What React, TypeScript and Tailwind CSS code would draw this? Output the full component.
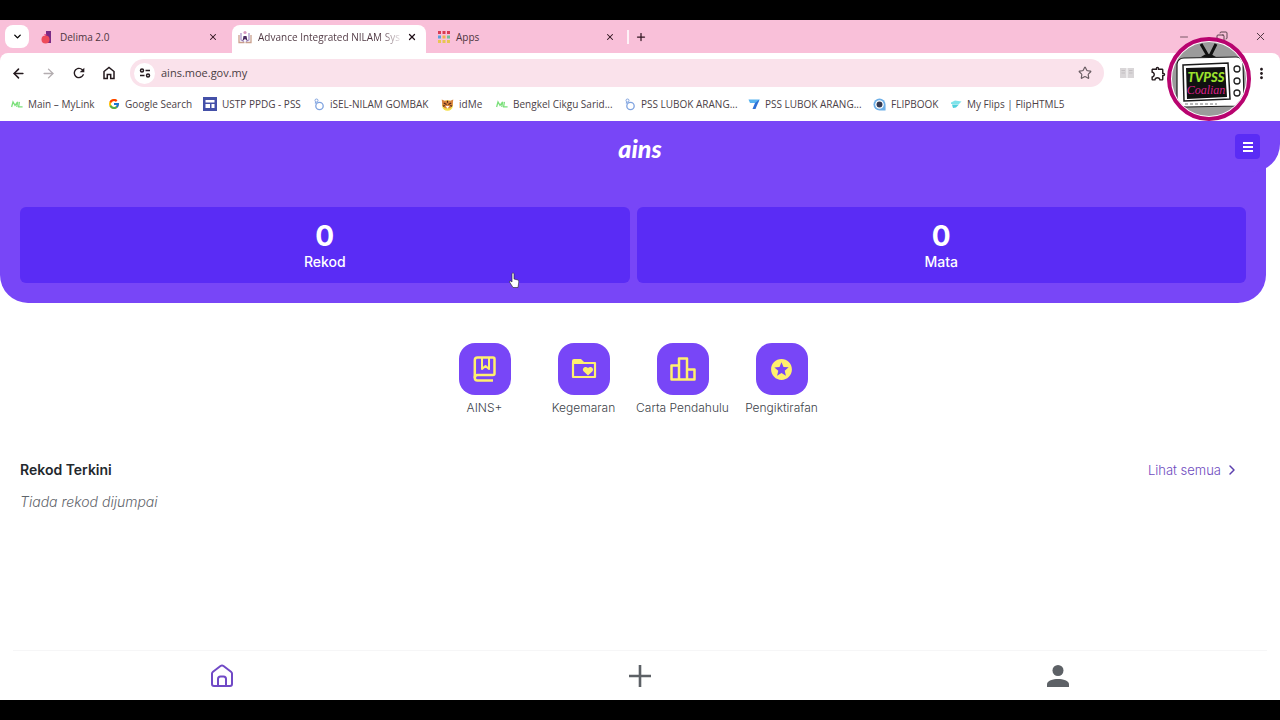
import React from 'react';
import {
  ArrowLeft,
  ArrowRight,
  ChevronDown,
  ChevronRight,
  Copy,
  Minus,
  Plus,
  Star,
  X,
} from 'lucide-react';
import { FcGoogle } from 'react-icons/fc';
import { MdMoreVert, MdOutlineExtension, MdRefresh, MdStars } from 'react-icons/md';

const MyLinkIcon = () => (
  <svg viewBox="0 0 12 12" className="w-3 h-3 shrink-0" fill="none" stroke="#7be07b" strokeWidth="1.3">
    <path d="M.6 9 2 4l2 3.4L6.600 4 5.800 9M8.400 3.800 7.600 8.800h4" />
  </svg>
);

const SitesIcon = () => (
  <svg viewBox="0 0 14 14" className="w-[14px] h-[14px] shrink-0">
    <path d="M0 0h14v14H0z" fill="#4450a8" />
    <path d="M2.500 3h9v2.500h-9zM2.500 7h4.500v4h-4.500zM8.500 7h3v4h-3z" fill="#fff" />
  </svg>
);

const BearIcon = () => (
  <svg viewBox="0 0 12 14" className="w-3 h-[14px] shrink-0" fill="none" stroke="#7fa3e0" strokeWidth="1.3">
    <circle cx="6.500" cy="9" r="3.700" />
    <circle cx="3.500" cy="3.500" r="1.500" strokeWidth="1" />
    <path d="M2.200 6.500 3 5" />
  </svg>
);

const TigerIcon = () => (
  <svg viewBox="0 0 14 14" className="w-[13px] h-[13px] shrink-0">
    <circle cx="7" cy="8" r="5.800" fill="#f5e04a" />
    <path d="M.8 1.500 4 3h6l3.200-1.500L12.500 8 10 11H4L1.500 8z" fill="#d9843b" />
    <path d="M3 5.500 6 7M11 5.500 8 7M7 3v2M2 9l2-1M12 9l-2-1" stroke="#4a2418" strokeWidth="1.200" />
    <path d="M5 8.500h4L7 11.500z" fill="#fff" />
  </svg>
);

const SevenIcon = () => (
  <svg viewBox="0 0 12 12" className="w-3 h-3 shrink-0">
    <path d="M.5 1.500h11L10 5H2z" fill="#58b4f0" />
    <path d="M11.500 1.500 7.500 11H4.500L7 5z" fill="#2f6fd6" />
  </svg>
);

const FlipbookIcon = () => (
  <svg viewBox="0 0 14 14" className="w-[13px] h-[13px] shrink-0">
    <path d="M7 .5A6.500 6.500 0 1 0 7 13.500h6.500V7A6.500 6.500 0 0 0 7 .5z" fill="#6fb0e8" />
    <circle cx="7" cy="7" r="4.600" fill="#fff" />
    <circle cx="7" cy="7" r="3.200" fill="#333a52" />
  </svg>
);

const FlipsIcon = () => (
  <svg viewBox="0 0 12 12" className="w-3 h-3 shrink-0">
    <path d="M1 4.500 5 2.500l6.500 1L9 6H1z" fill="#7fe3ea" />
    <path d="M2 6.500h7L6 9.500 3 10z" fill="#4fd0dc" />
  </svg>
);

const bookmarks = [
  { label: 'Main – MyLink', icon: <MyLinkIcon />, width: 'w-[97px]' },
  { label: 'Google Search', icon: <FcGoogle className="w-3 h-3 shrink-0" />, width: 'w-[95px]' },
  { label: 'USTP PPDG - PSS', icon: <SitesIcon />, width: 'w-[110px]' },
  { label: 'iSEL-NILAM GOMBAK', icon: <BearIcon />, width: 'w-[128px]' },
  { label: 'idMe', icon: <TigerIcon />, width: 'w-[55px]' },
  { label: 'Bengkel Cikgu Sarid...', icon: <MyLinkIcon />, width: 'w-[128px]' },
  { label: 'PSS LUBOK ARANG...', icon: <BearIcon />, width: 'w-[124px]' },
  { label: 'PSS LUBOK ARANG...', icon: <SevenIcon />, width: 'w-[125px]' },
  { label: 'FLIPBOOK', icon: <FlipbookIcon />, width: 'w-[77px]' },
  { label: 'My Flips | FlipHTML5', icon: <FlipsIcon />, width: 'w-[110px]' },
];

const DelimaIcon = () => (
  <svg viewBox="0 0 12 14" className="w-3 h-[14px] shrink-0">
    <path d="M5 1h5v12H5z" fill="#7a2a86" />
    <circle cx="4.500" cy="9.500" r="4" fill="#ee4b5a" />
    <path d="M3 4l1.500 2L6 4.500z" fill="#e2387a" />
  </svg>
);

const NilamIcon = () => (
  <svg viewBox="0 0 14 14" className="w-[14px] h-[14px] shrink-0" fill="none">
    <path d="M1 5v7.500h5.500M13 5v7.500H7.500" stroke="#c9a08e" strokeWidth="1.300" />
    <path d="M3 3v7l3 1.500M11 3v7l-3 1.500" stroke="#a58cc4" strokeWidth="1.200" />
    <circle cx="7" cy="2.500" r="1.600" fill="#d99bc0" />
    <path d="M4.500 11 5.500 6h3l1 5L7 9z" fill="#4d2d62" />
  </svg>
);

const appDots = [
  '#d93a52', '#d93a52', '#d93a52',
  '#5aa0dc', '#f0b04c', '#6fbf9a',
  '#e8c552', '#e8c552', '#e8c552',
];

const AppsIcon = () => (
  <svg viewBox="0 0 12 12" className="w-3 h-3 shrink-0">
    {appDots.map((color, i) => (
      <rect key={i} x={(i % 3) * 4.500} y={Math.floor(i / 3) * 4.500} width="3" height="3" fill={color} />
    ))}
  </svg>
);

const TabStrip = () => (
  <div className="flex h-[33px] items-end bg-[#f9c0d9] pl-1 text-[10px] text-[#4d3540]">
    <button aria-label="Search tabs" className="mb-[5px] ml-[1px] flex h-[23px] w-6 items-center justify-center rounded-lg bg-white text-black">
      <ChevronDown size={11} strokeWidth={3} />
    </button>
    <div className="flex h-7 w-[203px] items-center pl-3 pr-[14px] pb-1">
      <DelimaIcon />
      <span className="ml-[7px] flex-1">Delima 2.0</span>
      <button aria-label="Close Delima 2.0" className="text-[#301520]"><X size={10} strokeWidth={2.500} /></button>
    </div>
    <div className="flex h-7 w-[194px] items-center rounded-t-lg bg-white pl-[6px] pr-[9px] pb-1">
      <NilamIcon />
      <span className="ml-[6px] whitespace-nowrap bg-linear-to-r from-[#4d3540] from-85% to-[#e6dfe2] bg-clip-text text-transparent">
        Advance Integrated NILAM Sys
      </span>
      <button aria-label="Close Advance Integrated NILAM System" className="ml-auto text-[#201018]"><X size={10} strokeWidth={3} /></button>
    </div>
    <div className="flex h-7 w-[201px] items-center pl-3 pr-3 pb-1">
      <AppsIcon />
      <span className="ml-[6px] flex-1">Apps</span>
      <button aria-label="Close Apps" className="text-[#301520]"><X size={10} strokeWidth={2.500} /></button>
    </div>
    <span className="mb-[9px] h-[14px] w-[2px] bg-white/80" />
    <button aria-label="New tab" className="mb-[10px] ml-[6px] text-[#301520]"><Plus size={12} strokeWidth={2.500} /></button>
    <div className="mb-[10px] ml-auto mr-[13px] flex items-center gap-[26px] text-[#4d3540]">
      <button aria-label="Minimize"><Minus size={12} strokeWidth={1.500} /></button>
      <button aria-label="Restore"><Copy size={12} strokeWidth={1.800} className="-scale-x-100" /></button>
      <button aria-label="Close window"><X size={13} strokeWidth={1.800} /></button>
    </div>
  </div>
);

const Toolbar = () => (
  <div className="flex items-center rounded-t-lg bg-white pt-[6px] text-[#241a1e]">
    <div className="flex w-[130px] shrink-0 items-center gap-[15px] pl-[11px]">
      <button aria-label="Back"><ArrowLeft size={15} strokeWidth={2.500} /></button>
      <button aria-label="Forward" className="text-[#b3adb0]"><ArrowRight size={15} strokeWidth={2.200} /></button>
      <button aria-label="Reload"><MdRefresh size={16} /></button>
      <button aria-label="Home">
        <svg viewBox="0 0 14 14" className="h-[14px] w-[14px]" fill="none" stroke="currentColor" strokeWidth="1.500">
          <path d="M2 5.500 7 1.500l5 4v7H8.700v-4H5.300v4H2z" />
        </svg>
      </button>
    </div>
    <form className="flex h-7 flex-1 items-center rounded-full bg-[#fae2eb] pl-1 pr-3" onSubmit={(e) => e.preventDefault()}>
      <button type="button" aria-label="Site information" className="flex h-[21px] w-[21px] items-center justify-center rounded-full bg-white">
        <svg viewBox="0 0 12 12" className="h-3 w-3" fill="none" stroke="currentColor" strokeWidth="1.500">
          <circle cx="3" cy="3.500" r="1.500" />
          <path d="M6.500 3.500H11M1 8.500h4.500" />
          <circle cx="9" cy="8.500" r="1.500" />
        </svg>
      </button>
      <input
        aria-label="Address"
        defaultValue="ains.moe.gov.my"
        className="ml-[6px] min-w-0 flex-1 bg-transparent text-[11px] text-[#4a3d43] outline-none"
      />
      <button type="button" aria-label="Bookmark this page" className="text-[#6a5d63]"><Star size={14} strokeWidth={2} /></button>
    </form>
    <div className="flex w-[176px] shrink-0 items-center pl-4">
      <svg viewBox="0 0 14 12" className="h-3 w-[14px]">
        <path d="M0 1h6.500v10H0zM7.500 1H14v10H7.500z" fill="#d9d6d8" />
        <path d="M1.500 3.500h3.500M1.500 6h3.500M9 3.500h3.500M9 6h3.500" stroke="#c3bfc2" />
      </svg>
      <button aria-label="Extensions" className="ml-4"><MdOutlineExtension size={17} /></button>
      <button aria-label="Browser menu" className="ml-auto mr-[10px]"><MdMoreVert size={17} /></button>
    </div>
  </div>
);

const BookmarksBar = () => (
  <nav aria-label="Bookmarks" className="flex h-[34px] items-center bg-white pl-[11px] text-[10px] text-[#4b4146]">
    {bookmarks.map((b, i) => (
      <a key={i} href="#" className={`flex shrink-0 items-center gap-[5px] whitespace-nowrap ${b.width}`}>
        {b.icon}
        {b.label}
      </a>
    ))}
  </nav>
);

const ChannelBadge = () => (
  <svg viewBox="0 0 84 84" className="absolute right-[29px] top-[37px] z-30 h-[84px] w-[84px]">
    <defs>
      <clipPath id="badge">
        <circle cx="42" cy="42" r="37" />
      </clipPath>
    </defs>
    <circle cx="42" cy="42" r="40" fill="#fff" stroke="#b8046f" strokeWidth="4" />
    <g clipPath="url(#badge)">
      <path d="M4 4h76v76H4z" fill="#9b9b9b" />
      <path d="M34 7l7 12M49 7l-6 12" stroke="#111" strokeWidth="3" />
      <path d="M34 20q7-6 15 0z" fill="#111" />
      <path d="M10 27q1-6 7-6l52-1q6 0 7 6l1 35q0 7-7 8l-51 1q-9 0-9-6z" fill="#fff" stroke="#1a1a1a" strokeWidth="1.200" />
      <path d="M16 28l45-2 2 36-46 2z" fill="#fff" stroke="#1a1a1a" strokeWidth="1.500" />
      <path d="M19 31l39-1 2 30-40 2z" fill="#111" />
      <g fill="#fff" stroke="#222" strokeWidth="1.300">
        <circle cx="70" cy="32" r="3" />
        <circle cx="70" cy="44" r="3" />
        <circle cx="70" cy="56" r="3" />
      </g>
      <path d="M18 67h32" stroke="#777" strokeDasharray="3 2" />
    </g>
    <text x="39" y="45" textAnchor="middle" fontSize="13" fill="#9be22d" className="font-['Lato'] font-black italic">TVPSS</text>
    <text x="39" y="57" textAnchor="middle" fontSize="12" fill="#dc1f8d" className="font-['Liberation_Serif'] italic">Coalian</text>
  </svg>
);

const BookIcon = () => (
  <svg viewBox="0 0 24 26" className="h-[26px] w-6" fill="none" stroke="currentColor" strokeWidth="2.500" strokeLinejoin="round">
    <path d="M6 1.500h14a1.500 1.500 0 0 1 1.500 1.500v14.500a1.500 1.500 0 0 1-1.500 1.500H4.500a2.700 2.700 0 0 0 0 5.500H20" />
    <path d="M6 1.500H4.500a2.700 2.700 0 0 0-2.700 2.700v17.500" />
    <path d="M9 2v11l3.500-3 3.500 3V2" strokeWidth="2" />
  </svg>
);

const FolderHeartIcon = () => (
  <svg viewBox="0 0 26 22" className="h-[22px] w-[26px]">
    <path d="M2 5v14h22V5z" fill="none" stroke="currentColor" strokeWidth="2.200" strokeLinejoin="round" />
    <path d="M1 5.500V3a2 2 0 0 1 2-2h7l3 3v2z" fill="currentColor" />
    <path d="M17 17.500l-4.500-4.300c-2-2.500 1.500-6 4.500-3.200 3-2.800 6.500.7 4.500 3.200z" fill="currentColor" />
  </svg>
);

const ChartIcon = () => (
  <svg viewBox="0 0 26 24" className="h-6 w-[26px]" fill="none" stroke="currentColor" strokeWidth="2.500" strokeLinejoin="round">
    <path d="M9 22.500V1.500h8v21M9 8.500H1.500v14h23V12.500H17" />
  </svg>
);

const shortcuts = [
  { label: 'AINS+', icon: <BookIcon /> },
  { label: 'Kegemaran', icon: <FolderHeartIcon /> },
  { label: 'Carta Pendahulu', icon: <ChartIcon /> },
  { label: 'Pengiktirafan', icon: <MdStars size={25} /> },
];

const stats = [
  { label: 'Rekod', value: 0 },
  { label: 'Mata', value: 0 },
];

const PortalPage = () => (
  <div className="flex flex-1 flex-col bg-white font-['Inter',sans-serif]">
    <header className="relative z-10 grid h-[51px] grid-cols-3 items-center rounded-br-[28px] bg-[#7846f7] px-5 text-white">
      <h1 className="col-start-2 pt-1 text-center font-['Lato',sans-serif] text-[25px] font-black italic">ains</h1>
      <button aria-label="Menu" className="flex h-[25px] w-[25px] items-center justify-center justify-self-end rounded bg-[#5a2cf5]">
        <svg viewBox="0 0 12 10" className="h-[10px] w-3" stroke="#fff" strokeWidth="2">
          <path d="M1 1h10M1 5h10M1 9h10" />
        </svg>
      </button>
    </header>

    <main className="-mt-[51px] mr-[14px] flex-1">
      <section className="grid grid-cols-2 gap-[7px] rounded-b-[28px] bg-[#7846f7] px-5 pb-5 pt-[86px] text-center text-white">
        {stats.map((s) => (
          <div key={s.label} className="h-[76px] rounded-md bg-[#5a2cf5] pt-[14px]">
            <p className="text-[28px] font-bold leading-[30px]">{s.value}</p>
            <p className="text-[14px] font-medium leading-[22px]">{s.label}</p>
          </div>
        ))}
      </section>

      <section className="flex justify-center pt-10">
        {shortcuts.map((s) => (
          <a key={s.label} href="#" className="flex w-[99px] flex-col items-center whitespace-nowrap text-[12px] font-light leading-4 text-[#3d434a]">
            <span className="mb-[5px] flex h-[52px] w-[52px] items-center justify-center rounded-[16px] bg-[#7846f7] text-[#fff06e]">
              {s.icon}
            </span>
            {s.label}
          </a>
        ))}
      </section>

      <section className="px-5 pt-11">
        <div className="flex items-center justify-between pr-[6px]">
          <h2 className="text-[14px] font-semibold leading-5 text-[#23282d]">Rekod Terkini</h2>
          <a href="#" className="flex items-center gap-[3px] text-[13px] font-light leading-5 text-[#6f4cc0]">
            Lihat semua
            <ChevronRight size={16} strokeWidth={2.200} className="text-[#5b3fae]" />
          </a>
        </div>
        <p className="pt-3 text-[14px] font-light italic leading-5 text-[#5f656b]">Tiada rekod dijumpai</p>
      </section>
    </main>

    <nav aria-label="Main" className="mx-[13px] grid h-[50px] grid-cols-3 items-center border-t border-[#f6f6f7] text-[#5d6166]">
      <a href="#" aria-label="Home" className="justify-self-center text-[#7049c6]">
        <svg viewBox="0 0 24 24" className="h-6 w-6" fill="none" stroke="currentColor" strokeWidth="2" strokeLinejoin="round">
          <path d="M2 9.500Q2 8.500 3 7.700L10.500 2Q12 1 13.500 2L21 7.700q1 .8 1 1.800V20a2 2 0 0 1-2 2H4a2 2 0 0 1-2-2z" />
          <path d="M8 22v-7a2.500 2.500 0 0 1 2.500-2.500h3A2.500 2.500 0 0 1 16 15v7" />
        </svg>
      </a>
      <a href="#" aria-label="Add" className="justify-self-center">
        <svg viewBox="0 0 24 24" className="h-6 w-6" stroke="currentColor" strokeWidth="2.600">
          <path d="M1 12h22M12 1v22" />
        </svg>
      </a>
      <a href="#" aria-label="Profile" className="justify-self-center">
        <svg viewBox="0 0 24 24" className="h-6 w-6" fill="currentColor">
          <circle cx="12" cy="6.500" r="5.500" />
          <path d="M1 23v-2.500C1 16.500 7 15 12 15s11 1.500 11 5.500V23z" />
        </svg>
      </a>
    </nav>
  </div>
);

const HandCursor = () => (
  <svg viewBox="0 0 10 16" className="absolute left-[509px] top-[272px] z-20 h-4 w-[10px]">
    <path
      d="M3 1.500Q4 .2 5 1.500V7l4 1q1 .5.800 2L9 15.500H4L.5 10q0-1.500 1.300-1L3 10z"
      fill="#fff"
      stroke="#222"
      strokeWidth=".6"
    />
  </svg>
);

const App: React.FC = () => {
  return (
    <div className="relative flex min-h-screen flex-col bg-black py-5">
      <div className="bg-[#f9c0d9] font-['Open_Sans',sans-serif]">
        <TabStrip />
        <Toolbar />
        <BookmarksBar />
      </div>
      <PortalPage />
      <ChannelBadge />
      <HandCursor />
    </div>
  );
};

export default App;
